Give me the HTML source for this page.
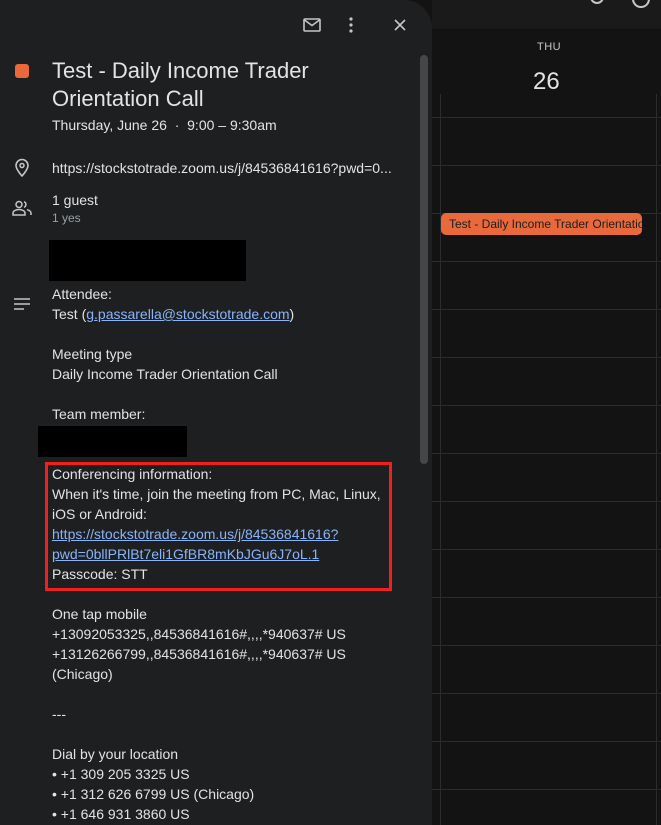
<!DOCTYPE html>
<html><head><meta charset="utf-8"><style>
*{margin:0;padding:0;box-sizing:border-box}
body{width:661px;height:825px;overflow:hidden;background:#131314;font-family:"Liberation Sans",Arial,sans-serif;color:#e3e3e3;position:relative}
.a{position:absolute;white-space:nowrap}
.hl{position:absolute;left:432px;right:0;height:1px;background:#2c2c2e}
.panel{position:absolute;left:0;top:0;width:432px;height:825px;background:#1e1f20;border-top-right-radius:28px}
.t{position:absolute;left:52px;font-size:14px;line-height:20px;color:#e3e3e3;white-space:nowrap}
a{color:#8ab4f8;text-decoration:underline}
</style></head><body>
<div class="a" style="left:432px;top:0;right:0;height:29px;background:#1a1a1b"></div>
<div class="a" style="left:440px;top:94px;width:1px;height:731px;background:#2c2c2e"></div>
<div class="a" style="left:656px;top:94px;width:1px;height:731px;background:#2c2c2e"></div>
<div class="hl" style="top:117px"></div><div class="hl" style="top:165px"></div><div class="hl" style="top:213px"></div><div class="hl" style="top:261px"></div><div class="hl" style="top:309px"></div><div class="hl" style="top:357px"></div><div class="hl" style="top:405px"></div><div class="hl" style="top:453px"></div><div class="hl" style="top:501px"></div><div class="hl" style="top:549px"></div><div class="hl" style="top:597px"></div><div class="hl" style="top:645px"></div><div class="hl" style="top:693px"></div><div class="hl" style="top:741px"></div><div class="hl" style="top:789px"></div>
<div class="a" style="left:537px;top:41px;font-size:11px;color:#c4c7c5;letter-spacing:.5px">THU</div>
<div class="a" style="left:533px;top:68px;font-size:24px;color:#e3e3e3">26</div>
<div class="a" style="left:441px;top:213px;width:201px;height:22px;background:#e8693b;border-radius:5px;font-size:12px;line-height:22px;padding-left:8px;color:#1e1e1e;overflow:hidden">Test - Daily Income Trader Orientation Call</div>
<div class="a" style="left:590px;top:-10px;width:14px;height:14px;border:2px solid #c4c7c5;border-radius:50%"></div>
<div class="a" style="left:632px;top:-10px;width:18px;height:18px;border:2px solid #c4c7c5;border-radius:50%"></div>

<div class="panel"></div>
<div class="a" style="left:420px;top:55px;width:8px;height:409px;background:#444648;border-radius:4px"></div>
<svg class="a" style="left:303px;top:17px" width="18" height="16" viewBox="0 0 18 16"><rect x="1" y="2" width="16" height="12" rx="1" fill="none" stroke="#c4c7c5" stroke-width="1.6"/><path d="M1.5 3L9 8.5L16.5 3" fill="none" stroke="#c4c7c5" stroke-width="1.6"/></svg>
<svg class="a" style="left:349px;top:17px" width="4" height="16"><circle cx="2" cy="2" r="1.6" fill="#c4c7c5"/><circle cx="2" cy="8" r="1.6" fill="#c4c7c5"/><circle cx="2" cy="14" r="1.6" fill="#c4c7c5"/></svg>
<svg class="a" style="left:394px;top:19px" width="12" height="12"><path d="M1 1L11 11M11 1L1 11" stroke="#c4c7c5" stroke-width="1.6"/></svg>

<div class="a" style="left:15px;top:64px;width:14px;height:14px;background:#e8693b;border-radius:3px"></div>
<div class="a" style="left:52px;top:57px;font-size:22px;line-height:28px;color:#e3e3e3;white-space:normal;width:340px">Test - Daily Income Trader Orientation Call</div>
<div class="t" style="top:115px">Thursday, June 26 &nbsp;·&nbsp; 9:00 – 9:30am</div>

<svg class="a" style="left:14px;top:158px" width="16" height="20" viewBox="0 0 16 20"><path d="M8 18C8 18 2 11.5 2 7.5A6 6 0 0 1 14 7.5C14 11.5 8 18 8 18Z" fill="none" stroke="#c4c7c5" stroke-width="1.6"/><circle cx="8" cy="7.5" r="2" fill="none" stroke="#c4c7c5" stroke-width="1.5"/></svg>
<div class="t" style="top:158px">https://stockstotrade.zoom.us/j/84536841616?pwd=0...</div>
<svg class="a" style="left:12px;top:200px" width="20" height="16" viewBox="0 0 20 16"><circle cx="7" cy="4.5" r="3" fill="none" stroke="#c4c7c5" stroke-width="1.5"/><path d="M1 15v-2c0-2 3-3.5 6-3.5s6 1.5 6 3.5v2z" fill="none" stroke="#c4c7c5" stroke-width="1.5"/><path d="M12 1.7a3 3 0 0 1 0 5.6M15 9.7c2 .5 4 1.5 4 3.3v2" fill="none" stroke="#c4c7c5" stroke-width="1.5"/></svg>
<div class="t" style="top:190px">1 guest</div>
<div class="a" style="left:52px;top:211px;font-size:12px;color:#9aa0a6">1 yes</div>

<div class="a" style="left:49px;top:240px;width:197px;height:41px;background:#000"></div>
<svg class="a" style="left:14px;top:298px" width="16" height="12"><path d="M0 1H16M0 6H16M0 11H10" stroke="#c4c7c5" stroke-width="1.6"/></svg>
<div class="t" style="top:284px">Attendee:</div>
<div class="t" style="top:304px">Test (<a>g.passarella@stockstotrade.com</a>)</div>
<div class="t" style="top:344px">Meeting type</div>
<div class="t" style="top:364px">Daily Income Trader Orientation Call</div>
<div class="t" style="top:404px">Team member:</div>
<div class="a" style="left:38px;top:426px;width:149px;height:31px;background:#000"></div>
<div class="a" style="left:45px;top:462px;width:347px;height:129px;border:3px solid #f02020"></div>
<div class="t" style="top:464px">Conferencing information:</div>
<div class="t" style="top:484px">When it's time, join the meeting from PC, Mac, Linux,</div>
<div class="t" style="top:504px">iOS or Android:</div>
<div class="t" style="top:524px"><a>https://stockstotrade.zoom.us/j/84536841616?</a></div>
<div class="t" style="top:544px"><a>pwd=0bllPRlBt7eli1GfBR8mKbJGu6J7oL.1</a></div>
<div class="t" style="top:564px">Passcode: STT</div>
<div class="t" style="top:604px">One tap mobile</div>
<div class="t" style="top:624px">+13092053325,,84536841616#,,,,*940637# US</div>
<div class="t" style="top:644px">+13126266799,,84536841616#,,,,*940637# US</div>
<div class="t" style="top:664px">(Chicago)</div>
<div class="t" style="top:704px">---</div>
<div class="t" style="top:744px">Dial by your location</div>
<div class="t" style="top:764px">• +1 309 205 3325 US</div>
<div class="t" style="top:784px">• +1 312 626 6799 US (Chicago)</div>
<div class="t" style="top:804px">• +1 646 931 3860 US</div>
</body></html>
